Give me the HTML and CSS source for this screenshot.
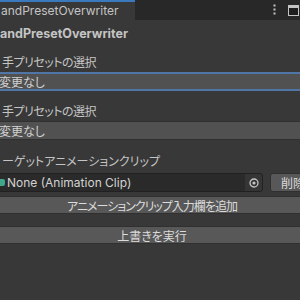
FILE: index.html
```html
<!DOCTYPE html>
<html lang="ja">
<head>
<meta charset="utf-8">
<link rel="stylesheet" href="styles.css">
</head>
<body>
<div class="tabbar">
  <div class="tab"><span class="tab-label">andPresetOverwriter</span></div>
  <div class="tab-tools">
    <svg class="dots" width="3" height="12" viewBox="0 0 3 12"><rect x="0.5" y="0.5" width="2" height="2" fill="#c4c4c4"/><rect x="0.5" y="4.5" width="2" height="2" fill="#c4c4c4"/><rect x="0.5" y="8.5" width="2" height="2" fill="#c4c4c4"/></svg>
    <svg class="winicon" width="11" height="11" viewBox="0 0 11 11"><rect x="0.5" y="0.5" width="10" height="10" fill="#1e1e1e" stroke="#c4c4c4"/><rect x="1" y="1" width="9" height="2" fill="#c4c4c4"/></svg>
  </div>
</div>
<div class="content">
  <div class="title">andPresetOverwriter</div>
  <div class="label">手プリセットの選択</div>
  <div class="popup focused"><span class="popup-text">変更なし</span></div>
  <div class="label label-2">手プリセットの選択</div>
  <div class="popup"><span class="popup-text">変更なし</span></div>
  <div class="label label-3">ーゲットアニメーションクリップ</div>
  <div class="objrow">
    <div class="objfield">
      <span class="clipicon"></span>
      <span class="objtext">None (Animation Clip)</span>
      <span class="picker"><svg width="10" height="10" viewBox="0 0 10 10"><circle cx="5" cy="5" r="4" fill="none" stroke="#c4c4c4" stroke-width="1.3"/><circle cx="5" cy="5" r="1.6" fill="#c4c4c4"/></svg></span>
    </div>
    <div class="btn small">削除</div>
  </div>
  <div class="btn wide add">アニメーションクリップ入力欄を追加</div>
  <div class="btn wide exec">上書きを実行</div>
</div>
</body>
</html>
```
FILE: styles.css
```css
html, body {
  margin: 0;
  padding: 0;
  background: #383838;
  overflow: hidden;
  width: 300px;
  height: 300px;
}
body {
  font-family: Inter, "Noto Sans CJK JP", sans-serif;
  font-size: 12px;
  color: #c4c4c4;
  font-feature-settings: "palt";
}
.tabbar {
  display: flex;
  height: 20px;
  background: #282828;
}
.tab {
  width: 135px;
  background: #383838;
  border-top: 2px solid #3a79bb;
  box-sizing: border-box;
  display: flex;
  align-items: center;
  overflow: hidden;
  white-space: nowrap;
}
.tab-label {
  line-height: 16px;
  padding-left: 1px;
}
.tab-tools {
  flex: 1;
  display: flex;
  justify-content: flex-end;
  align-items: center;
  gap: 12px;
  padding-right: 1px;
}
.dots { display: block; }
.winicon { display: block; }
.content {
  padding-top: 5px;
}
.title {
  font-weight: 700;
  font-size: 12.5px;
  height: 18px;
  line-height: 18px;
}
.label {
  margin-top: 13px;
  height: 14px;
  line-height: 14px;
  padding-left: 2px;
  letter-spacing: -0.5px;
}
.label-2 { margin-top: 14px; }
.label-3 { margin-top: 15px; letter-spacing: 0; }
.popup {
  margin: 2px -4px 0 -4px;
  height: 19px;
  box-sizing: border-box;
  background: #515151;
  border-top: 1px solid #303030;
  border-bottom: 1px solid #303030;
  display: flex;
  align-items: center;
}
.popup.focused {
  border-top: 2px solid #4f76a6;
  border-bottom: 2px solid #4f76a6;
}
.popup-text {
  padding-left: 3px;
  color: #d2d2d2;
}
.objrow {
  display: flex;
  margin: 4px -20px 0 -4px;
  height: 19px;
  gap: 7px;
}
.objfield {
  flex: 1;
  display: flex;
  align-items: center;
  background: #2a2a2a;
  border: 1px solid #212121;
  border-radius: 3px;
  box-sizing: border-box;
}
.clipicon {
  width: 7px;
  height: 7px;
  margin-left: 1px;
  border-radius: 2px;
  background: #3fa88a;
}
.objtext {
  margin-left: 2px;
  flex: 1;
  color: #d2d2d2;
}
.picker {
  width: 17px;
  align-self: stretch;
  display: flex;
  align-items: center;
  justify-content: center;
  background: #353535;
  border-radius: 0 2px 2px 0;
}
.picker svg { display: block; }
.btn {
  background: #585858;
  border: 1px solid #303030;
  border-radius: 3px;
  box-sizing: border-box;
  color: #dcdcdc;
  display: flex;
  align-items: center;
  justify-content: center;
  white-space: nowrap;
}
.btn.small {
  width: 50px;
  justify-content: flex-start;
  padding-left: 10px;
}
.btn.wide {
  margin: 4px -4px 0 -4px;
  height: 18px;
  padding-left: 4px;
}
.btn.add {
  letter-spacing: -1px;
}
.btn.exec {
  margin-top: 12px;
}
```
